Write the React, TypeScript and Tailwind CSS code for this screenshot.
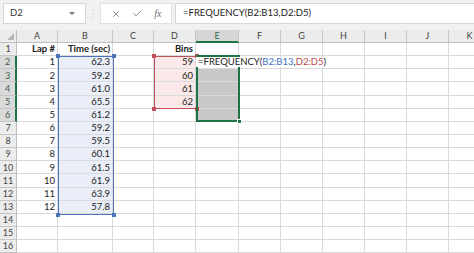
import { X, Check } from "lucide-react";

type Cell = { text: string; bold?: boolean };
type Row = { A?: Cell; B?: Cell; D?: Cell };

const COLS = ["A", "B", "C", "D", "E", "F", "G", "H", "I", "J", "K"];

const laps = ["62.3", "59.2", "61.0", "65.5", "61.2", "59.2", "59.5", "60.1", "61.5", "61.9", "63.9", "57.8"];
const bins = ["59", "60", "61", "62"];

const rows: Row[] = Array.from({ length: 16 }, (_, i) => {
  if (i === 0) return { A: { text: "Lap #", bold: true }, B: { text: "Time (sec)", bold: true }, D: { text: "Bins", bold: true } };
  const r: Row = {};
  if (i <= 12) {
    r.A = { text: String(i) };
    r.B = { text: laps[i - 1] };
  }
  if (i <= 4) r.D = { text: bins[i - 1] };
  return r;
});

function cellBg(col: string, rowNum: number) {
  if (col === "B" && rowNum >= 2 && rowNum <= 13) return "bg-[#e9eef8]";
  if (col === "D" && rowNum >= 2 && rowNum <= 5) return "bg-[#fbe8e8]";
  if (col === "E" && rowNum >= 3 && rowNum <= 6) return "bg-[#c8c8c8]";
  return "bg-white";
}

function FormulaBar() {
  return (
    <div className="h-[30px] bg-[#f1f1f1] flex items-start pt-[3px] pl-[3px]">
      <div className="w-[83px] h-[21px] bg-white border border-[#d6d6d6] flex items-center justify-between pl-[6px] pr-[10px] text-[#333] text-[9.5px]">
        <span>D2</span>
        <span className="w-0 h-0 border-l-[3px] border-r-[3px] border-t-[3px] border-l-transparent border-r-transparent border-t-[#777]" />
      </div>
      <div className="w-[14px] h-[21px] flex items-center justify-start pl-[2px] text-[#c4c4c4] text-[10px]">⋮</div>
      <div className="w-[72px] h-[21px] bg-white border border-[#e0e0e0] flex items-center justify-around px-[4px] text-[#6e6e6e]">
        <X className="w-[10px] h-[10px]" strokeWidth={1.8} />
        <Check className="w-[11px] h-[11px]" strokeWidth={1.8} />
        <span className="font-['Liberation_Serif',serif] italic text-[10px]">fx</span>
      </div>
      <div className="ml-[3px] flex-1 h-[21px] bg-white border border-r-0 border-[#d6d6d6] flex items-center pl-[7px] text-[#222] text-[9.5px] whitespace-nowrap">
        =FREQUENCY(B2:B13,D2:D5)
      </div>
    </div>
  );
}

function Sheet() {
  return (
    <div className="relative grid grid-cols-[17px_41px_55px_41px_42px_43px_42px_42px_42px_42px_42px_42px] grid-rows-[13px_repeat(16,13.15px)] bg-white">
      {/* header row */}
      <div className="relative bg-[#ececec] border-r border-b border-[#bdbdbd]">
        <svg className="absolute right-[2px] bottom-[2px]" width="7" height="7" viewBox="0 0 7 7">
          <polygon points="7,0 7,7 0,7" fill="#b5b5b5" />
        </svg>
      </div>
      {COLS.map((c) => (
        <div
          key={c}
          className={
            c === "E"
              ? "bg-[#d6d6d6] border-r border-[#c6c6c6] border-b-2 border-b-[#217346] flex items-center justify-center text-[#2e6b47]"
              : "bg-[#ececec] border-r border-b border-[#c6c6c6] border-b-[#bdbdbd] flex items-center justify-center text-[#444]"
          }
        >
          {c}
        </div>
      ))}

      {rows.map((row, i) => {
        const n = i + 1;
        const selected = n >= 2 && n <= 6;
        return [
          <div
            key={`h${n}`}
            className={
              selected
                ? "bg-[#d9d9d9] border-r-2 border-r-[#217346] border-b border-b-[#c6c6c6] flex items-center justify-center text-[#3f5f4b]"
                : "bg-[#ececec] border-r border-r-[#bdbdbd] border-b border-b-[#c6c6c6] flex items-center justify-center text-[#444]"
            }
          >
            {n}
          </div>,
          ...COLS.map((c) => {
            const cell = (row as Record<string, Cell | undefined>)[c];
            if (c === "E" && n === 2) {
              return (
                <div key={`${c}${n}`} className="relative border-r border-b border-[#dadada] bg-white flex items-center overflow-visible">
                  <span className="relative z-10 bg-white pl-[2px] pr-[1px] whitespace-nowrap leading-none text-[9.5px]">
                    =FREQUENCY(<span className="text-[#3d6fc4]">B2:B13</span>,<span className="text-[#b8484f]">D2:D5</span>)
                  </span>
                </div>
              );
            }
            return (
              <div
                key={`${c}${n}`}
                className={`border-r border-b border-[#dadada] ${cellBg(c, n)} flex items-center justify-end pr-[2px] whitespace-nowrap leading-none text-[9.5px] ${cell?.bold ? "font-bold" : ""}`}
              >
                {cell?.text}
              </div>
            );
          }),
        ];
      })}

      {/* B2:B13 range */}
      <div className="absolute left-[58px] top-[26px] w-[56px] h-[159px] border-[1.5px] border-[#4f73b8] pointer-events-none">
        <span className="absolute -left-[3px] -top-[3px] w-[4px] h-[4px] bg-[#4f73b8]" />
        <span className="absolute -right-[3px] -top-[3px] w-[4px] h-[4px] bg-[#4f73b8]" />
        <span className="absolute -left-[3px] -bottom-[3px] w-[4px] h-[4px] bg-[#4f73b8]" />
        <span className="absolute -right-[3px] -bottom-[3px] w-[4px] h-[4px] bg-[#4f73b8]" />
      </div>
      {/* D2:D5 range */}
      <div className="absolute left-[154px] top-[26px] w-[43px] h-[53px] border-[1.5px] border-[#c0505a] pointer-events-none">
        <span className="absolute -left-[3px] -top-[3px] w-[4px] h-[4px] bg-[#c0505a]" />
        <span className="absolute -right-[3px] -top-[3px] w-[4px] h-[4px] bg-[#c0505a]" />
        <span className="absolute -left-[3px] -bottom-[3px] w-[4px] h-[4px] bg-[#c0505a]" />
        <span className="absolute -right-[3px] -bottom-[3px] w-[4px] h-[4px] bg-[#c0505a]" />
      </div>
      {/* E2:E6 selection */}
      <div className="absolute left-[196px] top-[25px] w-[44px] h-[67px] border-2 border-[#217346] pointer-events-none">
        <span className="absolute -right-[4px] -bottom-[4px] w-[5px] h-[5px] bg-[#217346] border border-white" />
      </div>
    </div>
  );
}

export default function App() {
  return (
    <div className="w-[474px] h-[253px] overflow-hidden bg-white font-['Lato',sans-serif] text-[9px] text-[#222]">
      <FormulaBar />
      <Sheet />
    </div>
  );
}
